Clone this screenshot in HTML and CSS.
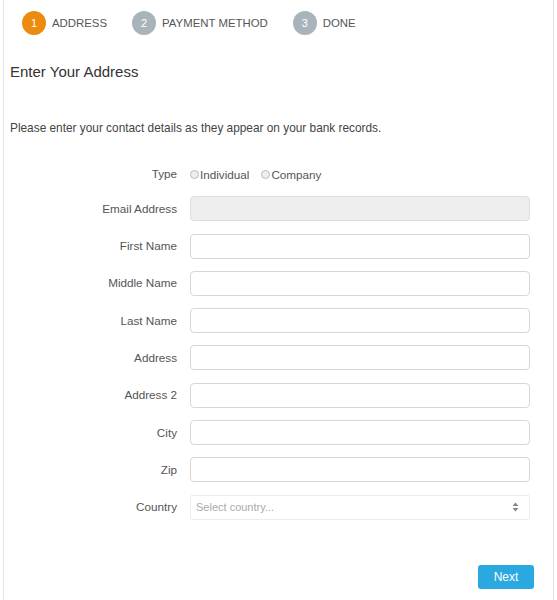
FILE: index.html
```html
<!DOCTYPE html>
<html lang="en">
<head>
    <meta charset="UTF-8">
    <meta name="viewport" content="width=device-width, initial-scale=1.0">
    <title>Enter Your Address</title>
    <link rel="stylesheet" href="styles.css">
</head>
<body>
    <div class="panel">
        <ul class="steps">
            <li class="step active"><span class="num">1</span>ADDRESS</li>
            <li class="step"><span class="num">2</span>PAYMENT METHOD</li>
            <li class="step"><span class="num">3</span>DONE</li>
        </ul>

        <h3 class="title">Enter Your Address</h3>
        <p class="intro">Please enter your contact details as they appear on your bank records.</p>

        <form id="addressForm" class="address-form">
            <span class="label">Type</span>
            <div class="radios">
                <label><input type="radio" name="type" value="individual">Individual</label>
                <label><input type="radio" name="type" value="company">Company</label>
            </div>

            <label class="label" for="email">Email Address</label>
            <input type="email" id="email" disabled>

            <label class="label" for="firstName">First Name</label>
            <input type="text" id="firstName">

            <label class="label" for="middleName">Middle Name</label>
            <input type="text" id="middleName">

            <label class="label" for="lastName">Last Name</label>
            <input type="text" id="lastName">

            <label class="label" for="address1">Address</label>
            <input type="text" id="address1">

            <label class="label" for="address2">Address 2</label>
            <input type="text" id="address2">

            <label class="label" for="city">City</label>
            <input type="text" id="city">

            <label class="label" for="zip">Zip</label>
            <input type="text" id="zip">

            <label class="label" for="country">Country</label>
            <div class="select">
                <span>Select country...</span>
                <svg width="7" height="10" viewBox="0 0 7 10"><path d="M3.5 0.5 L6.5 4 H0.5 Z M3.5 9.5 L6.5 6 H0.5 Z" fill="#888"/></svg>
            </div>
        </form>

        <div class="actions">
            <button type="submit" form="addressForm">Next</button>
        </div>
    </div>
</body>
</html>
```

FILE: styles.css
```css
body {
    font-family: "Liberation Sans", Arial, sans-serif;
    background-color: #fff;
    color: #555;
    margin: 0;
    padding: 0;
}
.panel {
    margin-left: 3px;
    width: 551px;
    height: 620px;
    border-left: 1px solid #e3e3e3;
    border-right: 1px solid #e3e3e3;
    padding: 0 23px 0 6px;
    box-sizing: border-box;
}
.steps {
    list-style: none;
    margin: 0;
    padding: 11px 0 0 12px;
    display: flex;
    align-items: center;
}
.step {
    display: flex;
    align-items: center;
    gap: 6px;
    margin-right: 25px;
    font-size: 11.4px;
    color: #555;
    height: 24px;
}
.num {
    width: 24px;
    height: 24px;
    border-radius: 50%;
    background-color: #a9b3ba;
    color: #fff;
    font-size: 11px;
    display: flex;
    align-items: center;
    justify-content: center;
}
.step.active .num {
    background-color: #ec8b0f;
}
.title {
    margin: 27px 0 0;
    font-size: 15px;
    font-weight: normal;
    line-height: 20px;
    color: #333;
}
.intro {
    margin: 38px 0 0;
    font-size: 11.85px;
    line-height: 17px;
    color: #444;
}
.address-form {
    margin-top: 27px;
    display: grid;
    grid-template-columns: 167px 1fr;
    column-gap: 13px;
    row-gap: 12.3px;
    align-items: center;
}
.label {
    text-align: right;
    font-size: 11.7px;
    color: #555;
    margin-top: -1px;
}
.radios {
    display: flex;
    gap: 12px;
    height: 20px;
    align-items: center;
    font-size: 11.7px;
    color: #555;
}
.radios label {
    display: flex;
    align-items: center;
}
.radios input {
    appearance: none;
    width: 9px;
    height: 9px;
    margin: 0 1px 0 0;
    border: 1px solid #bbb;
    border-radius: 50%;
    background-color: #eee;
    box-sizing: border-box;
}
.address-form > input {
    height: 25px;
    margin: 0;
    padding: 0 6px;
    border: 1px solid #d6d6d6;
    border-radius: 4px;
    box-sizing: border-box;
    font-size: 12px;
    background-color: #fff;
}
.address-form > input:disabled {
    background-color: #eee;
    border-color: #ddd;
}
.select {
    height: 25px;
    border: 1px solid #ececec;
    border-radius: 2px;
    box-sizing: border-box;
    display: flex;
    align-items: center;
    justify-content: space-between;
    padding: 0 10px 0 5px;
    font-size: 11px;
    color: #aaa;
}
.actions {
    display: flex;
    justify-content: flex-end;
    margin-top: 45px;
    margin-right: -4px;
}
button {
    width: 56px;
    height: 24px;
    padding: 0;
    background-color: #2aa8e0;
    color: #fff;
    border: none;
    border-radius: 3px;
    font-family: inherit;
    font-size: 12px;
    cursor: pointer;
}
```
